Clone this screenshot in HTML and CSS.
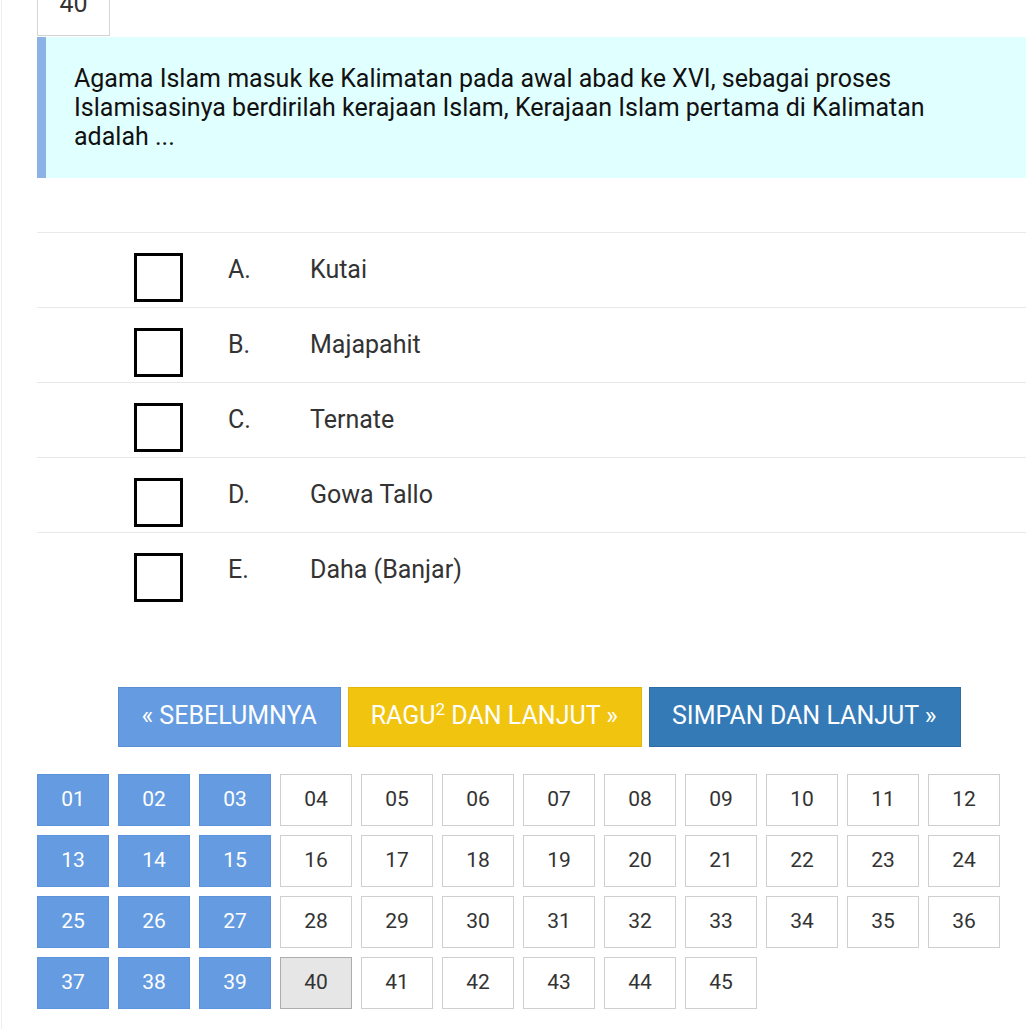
FILE: index.html
```html
<!DOCTYPE html>
<html lang="id">
<head>
<meta charset="utf-8">
<title>Soal 40</title>
<link rel="stylesheet" href="styles.css">
</head>
<body>
<div class="page">
  <div class="content">
    <div class="qnum">40</div>
    <div class="question">
      Agama Islam masuk ke Kalimatan pada awal abad ke XVI, sebagai proses Islamisasinya berdirilah kerajaan Islam, Kerajaan Islam pertama di Kalimatan adalah ...
    </div>

    <div class="options">
      <div class="option"><span class="check"></span><span class="letter">A.</span><span class="answer">Kutai</span></div>
      <div class="option"><span class="check"></span><span class="letter">B.</span><span class="answer">Majapahit</span></div>
      <div class="option"><span class="check"></span><span class="letter">C.</span><span class="answer">Ternate</span></div>
      <div class="option"><span class="check"></span><span class="letter">D.</span><span class="answer">Gowa Tallo</span></div>
      <div class="option"><span class="check"></span><span class="letter">E.</span><span class="answer">Daha (Banjar)</span></div>
    </div>

    <div class="actions">
      <a class="btn btn-prev">« SEBELUMNYA</a>
      <a class="btn btn-doubt">RAGU<sup>2</sup> DAN LANJUT »</a>
      <a class="btn btn-next">SIMPAN DAN LANJUT »</a>
    </div>

    <div class="nav-grid">
      <span class="nav done">01</span><span class="nav done">02</span><span class="nav done">03</span><span class="nav">04</span><span class="nav">05</span><span class="nav">06</span><span class="nav">07</span><span class="nav">08</span><span class="nav">09</span><span class="nav">10</span><span class="nav">11</span><span class="nav">12</span>
      <span class="nav done">13</span><span class="nav done">14</span><span class="nav done">15</span><span class="nav">16</span><span class="nav">17</span><span class="nav">18</span><span class="nav">19</span><span class="nav">20</span><span class="nav">21</span><span class="nav">22</span><span class="nav">23</span><span class="nav">24</span>
      <span class="nav done">25</span><span class="nav done">26</span><span class="nav done">27</span><span class="nav">28</span><span class="nav">29</span><span class="nav">30</span><span class="nav">31</span><span class="nav">32</span><span class="nav">33</span><span class="nav">34</span><span class="nav">35</span><span class="nav">36</span>
      <span class="nav done">37</span><span class="nav done">38</span><span class="nav done">39</span><span class="nav current">40</span><span class="nav">41</span><span class="nav">42</span><span class="nav">43</span><span class="nav">44</span><span class="nav">45</span>
    </div>
  </div>
</div>
</body>
</html>
```
FILE: styles.css
```css
html, body {
  margin: 0;
  padding: 0;
  background: #fff;
  overflow-x: hidden;
}

body {
  font-family: Roboto, "Liberation Sans", sans-serif;
  color: #333;
}

.page {
  margin-left: 1px;
  border-left: 1px solid #e9eef1;
  min-height: 1029px;
  overflow: hidden;
}

.content {
  width: 1005px;
  margin-left: 35px;
}

.qnum {
  width: 71px;
  height: 54px;
  margin-top: -20px;
  border: 1px solid #d4d4d4;
  text-align: center;
  font-size: 25px;
  line-height: 46px;
  color: #333;
}

.question {
  margin-top: 1px;
  background: #e0ffff;
  border-left: 9px solid #8db3e6;
  padding: 27px 60px 27px 28px;
  font-size: 25px;
  line-height: 29px;
  color: #111;
}

.options {
  margin-top: 54px;
}

.option {
  display: flex;
  align-items: flex-start;
  height: 74px;
  padding-left: 97px;
  border-top: 1px solid #e6e9ea;
  font-size: 25px;
  line-height: 29px;
  color: #333;
}

.check {
  box-sizing: border-box;
  width: 49px;
  height: 49px;
  margin-top: 20px;
  border: 3px solid #000;
  background: #fff;
}

.letter {
  width: 82px;
  margin-left: 45px;
  margin-top: 22px;
}

.answer {
  margin-top: 22px;
}

.actions {
  display: flex;
  justify-content: center;
  gap: 7px;
  margin-top: 80px;
}

.btn {
  display: block;
  height: 60px;
  box-sizing: border-box;
  padding: 0 23px 0 22px;
  font-size: 25px;
  line-height: 56px;
  color: #fff;
  text-decoration: none;
  white-space: nowrap;
}

.btn sup {
  font-size: 17px;
  line-height: 0;
  vertical-align: 9px;
}

.btn-prev {
  background: #659be0;
  border: 1px solid #5b8fd3;
}

.btn-doubt {
  background: #f1c40f;
  border: 1px solid #e2b60a;
}

.btn-next {
  background: #337ab7;
  border: 1px solid #2e6da4;
}

.nav-grid {
  display: grid;
  grid-template-columns: repeat(12, 72px);
  column-gap: 9px;
  row-gap: 9px;
  margin-top: 27px;
}

.nav {
  box-sizing: border-box;
  height: 52px;
  border: 1px solid #cfcfcf;
  background: #fff;
  text-align: center;
  font-size: 21px;
  line-height: 48px;
  color: #333;
}

.nav.done {
  background: #659be0;
  border-color: #5b93dc;
  color: #fff;
}

.nav.current {
  background: #e6e6e6;
  border-color: #adadad;
}
```
